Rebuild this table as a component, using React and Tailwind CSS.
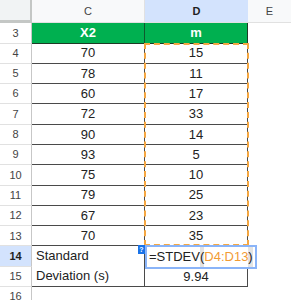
import React from 'react';

const data = [
  [70, 15],
  [78, 11],
  [60, 17],
  [72, 33],
  [90, 14],
  [93, 5],
  [75, 10],
  [79, 25],
  [67, 23],
  [70, 35],
];

function RowNum({ n, active }) {
  return (
    <div
      className={`w-[32px] h-full shrink-0 flex items-center justify-center border-r border-b border-r-[#c7c7c7] border-b-[#e1e1e1] text-[11px] ${
        active ? 'bg-[#d3e3fd] text-[#1f1f1f] font-bold' : 'bg-white text-[#444]'
      }`}
    >
      {n}
    </div>
  );
}

export default function App() {
  return (
    <div className="relative w-[291px] h-[300px] overflow-hidden bg-white font-['Liberation_Sans',Arial,sans-serif] text-[13px] text-[#222]">
      {/* Column headers */}
      <div className="flex h-[23px]">
        <div className="w-[32px] shrink-0 bg-[#f1f3f4] border-r-2 border-b-[3px] border-[#c4c7c5]" />
        <div className="w-[113px] shrink-0 flex items-center justify-center border-r border-b border-[#e1e1e1] bg-[#f8f9fa] text-[11px] text-[#444]">
          C
        </div>
        <div className="w-[103px] shrink-0 flex items-center justify-center border-b border-[#e1e1e1] bg-[#d3e3fd] text-[11px] font-bold text-[#1f1f1f]">
          D
        </div>
        <div className="flex-1 flex items-center justify-center border-b border-[#e1e1e1] bg-[#f8f9fa] text-[11px] text-[#444]">
          E
        </div>
      </div>

      {/* Header row 3 */}
      <div className="flex h-[20.5px]">
        <RowNum n={3} />
        <div className="w-[113px] shrink-0 flex items-center justify-center bg-[#00b050] text-white font-bold border-r border-b border-r-[#0e5a2e] border-b-[#1e3a26]">
          X2
        </div>
        <div className="w-[103px] shrink-0 flex items-center justify-center bg-[#00b050] text-white font-bold border-r border-b border-r-[#1e3a26] border-b-[#1e3a26]">
          m
        </div>
        <div className="flex-1" />
      </div>

      {/* Data rows */}
      {data.map(([x, m], i) => (
        <div key={i} className="flex h-[20.3px]">
          <RowNum n={i + 4} />
          <div className="w-[113px] shrink-0 flex items-center justify-center border-r border-b border-[#4a4a4a]">
            {x}
          </div>
          <div className="w-[103px] shrink-0 flex items-center justify-center border-r border-b border-[#4a4a4a]">
            {m}
          </div>
          <div className="flex-1" />
        </div>
      ))}

      {/* Rows 14-15 with merged label */}
      <div className="flex h-[40.6px]">
        <div className="flex flex-col w-[32px] shrink-0">
          <div className="h-[20.3px]">
            <RowNum n={14} active />
          </div>
          <div className="h-[20.3px]">
            <RowNum n={15} />
          </div>
        </div>
        <div className="w-[113px] shrink-0 flex flex-col justify-center pl-[4px] leading-[20px] border-r border-b border-[#4a4a4a]">
          <span>Standard</span>
          <span>Deviation (s)</span>
        </div>
        <div className="flex flex-col w-[103px] shrink-0">
          <div className="h-[20.3px] border-r border-b border-[#4a4a4a]" />
          <div className="h-[20.3px] flex items-center justify-center border-r border-b border-[#4a4a4a]">
            9.94
          </div>
        </div>
        <div className="flex-1" />
      </div>

      {/* Row 16 */}
      <div className="flex h-[20.3px]">
        <RowNum n={16} />
        <div className="flex-1" />
      </div>

      {/* Range highlight D4:D13 */}
      <div className="absolute left-[144px] top-[42.5px] w-[105px] h-[203px] border-2 border-dashed border-[#f5a742] pointer-events-none" />

      {/* Formula help badge */}
      <div className="absolute left-[138px] top-[245px] w-[7px] h-[9px] bg-[#1a73e8] text-white text-[7px] font-bold leading-[9px] text-center">
        ?
      </div>

      {/* In-cell formula editor */}
      <div className="absolute left-[145px] top-[245px] w-[112px] h-[24px] bg-white border-2 border-[#8ab4f8] flex items-center pl-[2px] text-[13px] text-[#222]">
        <span>=STDEV</span>
        <span className="bg-[#e3e3e3]">(</span>
        <span className="text-[#f29b34]">D4:D13</span>
        <span className="bg-[#e3e3e3]">)</span>
      </div>
    </div>
  );
}
